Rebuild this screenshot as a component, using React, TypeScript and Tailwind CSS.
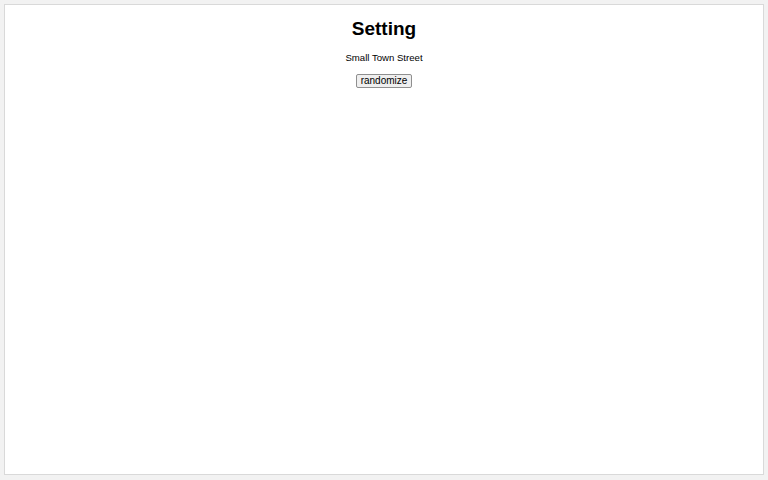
export default function App() {
  return (
    <div className="h-[480px] w-[768px] bg-[#f2f2f2] p-[4px] font-['Liberation_Sans',Arial,sans-serif]">
      <div className="flex h-[471px] flex-col items-center border border-[#d9d9d9] bg-white pt-[12px]">
        <h1 className="text-[19px] font-bold leading-[23px] text-black">Setting</h1>
        <p className="mt-[12px] text-[9.6px] leading-[12px] text-black">Small Town Street</p>
        <button className="mt-[10px] rounded-[2px] border border-[#8f8f8f] bg-[#efefef] px-[4px] text-[10px] leading-[12px] text-black">
          randomize
        </button>
      </div>
    </div>
  );
}
